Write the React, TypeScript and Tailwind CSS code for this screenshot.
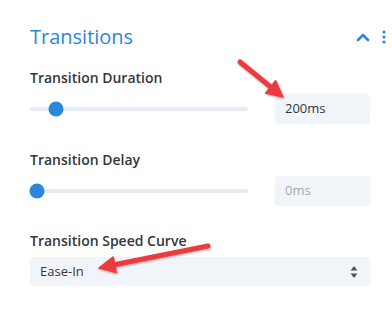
function Slider({ pos }: { pos: number }) {
  return (
    <div className="relative h-4 w-[218px] flex items-center">
      <div className="h-[4px] w-full rounded-full bg-[#e6ecf2]" />
      <div
        className="absolute top-1/2 h-[15px] w-[15px] -translate-y-1/2 -translate-x-1/2 rounded-full bg-[#2b87da]"
        style={{ left: pos }}
      />
    </div>
  );
}

function Field({ value, muted }: { value: string; muted?: boolean }) {
  return (
    <div
      className={`flex h-[30px] w-[95px] items-center rounded-[3px] bg-[#f1f4f8] px-[10px] text-[13px] ${
        muted ? "text-[#a3aab3]" : "text-[#32373c]"
      }`}
    >
      {value}
    </div>
  );
}

export default function App() {
  return (
    <div
      className="relative h-[311px] w-[392px] overflow-hidden bg-white pl-[30px] pr-[22px] pt-[23px]"
      style={{ fontFamily: '"Open Sans", "Noto Sans", sans-serif' }}
    >
      <div className="flex items-center justify-between">
        <h2 className="text-[20px] leading-[28px] font-normal text-[#2b87da]">Transitions</h2>
        <div className="-mr-[16px] flex items-center gap-[12px]">
          <svg width="14" height="10" viewBox="0 0 14 10">
            <path d="M2 8 L7 3 L12 8" fill="none" stroke="#2b87da" strokeWidth="2.6" strokeLinecap="round" strokeLinejoin="round" />
          </svg>
          <svg width="4" height="14" viewBox="0 0 4 14">
            <circle cx="2" cy="2" r="1.6" fill="#2b87da" />
            <circle cx="2" cy="7" r="1.6" fill="#2b87da" />
            <circle cx="2" cy="12" r="1.6" fill="#2b87da" />
          </svg>
        </div>
      </div>

      <div className="mt-[17px] text-[14px] leading-[20px] font-semibold text-[#32373c]">Transition Duration</div>
      <div className="mt-[6px] flex items-center gap-[27px]">
        <Slider pos={26} />
        <Field value="200ms" />
      </div>

      <div className="mt-[26px] text-[14px] leading-[20px] font-semibold text-[#32373c]">Transition Delay</div>
      <div className="mt-[6px] flex items-center gap-[27px]">
        <Slider pos={7} />
        <Field value="0ms" muted />
      </div>

      <div className="mt-[25px] text-[14px] leading-[20px] font-semibold text-[#32373c]">Transition Speed Curve</div>
      <div className="mt-[6px] flex h-[29px] w-[340px] items-center justify-between rounded-[3px] bg-[#f1f4f8] pl-[10px] pr-[12px] text-[13px] text-[#32373c]">
        <span>Ease-In</span>
        <svg width="8" height="14" viewBox="0 0 8 14">
          <path d="M4 1 L7.5 5.5 L0.5 5.5 Z" fill="#4c5866" />
          <path d="M4 13 L7.5 8.5 L0.5 8.5 Z" fill="#4c5866" />
        </svg>
      </div>

      <svg className="pointer-events-none absolute left-0 top-0" width="392" height="311" viewBox="0 0 392 311">
        <defs>
          <filter id="sh" x="-20%" y="-20%" width="140%" height="140%">
            <feDropShadow dx="0.5" dy="1" stdDeviation="1" floodColor="#000" floodOpacity="0.35" />
          </filter>
        </defs>
        <g filter="url(#sh)" fill="#ec3b3f" stroke="#ec3b3f">
          <line x1="240" y1="62" x2="272" y2="88" strokeWidth="5" strokeLinecap="round" />
          <polygon points="283,97 265.6,93.1 275.6,80.7" strokeWidth="1.5" strokeLinejoin="round" />
          <line x1="208" y1="246" x2="113" y2="265" strokeWidth="5" strokeLinecap="round" />
          <polygon points="99,268 116.3,272.6 113.1,257" strokeWidth="1.5" strokeLinejoin="round" />
        </g>
      </svg>
    </div>
  );
}
